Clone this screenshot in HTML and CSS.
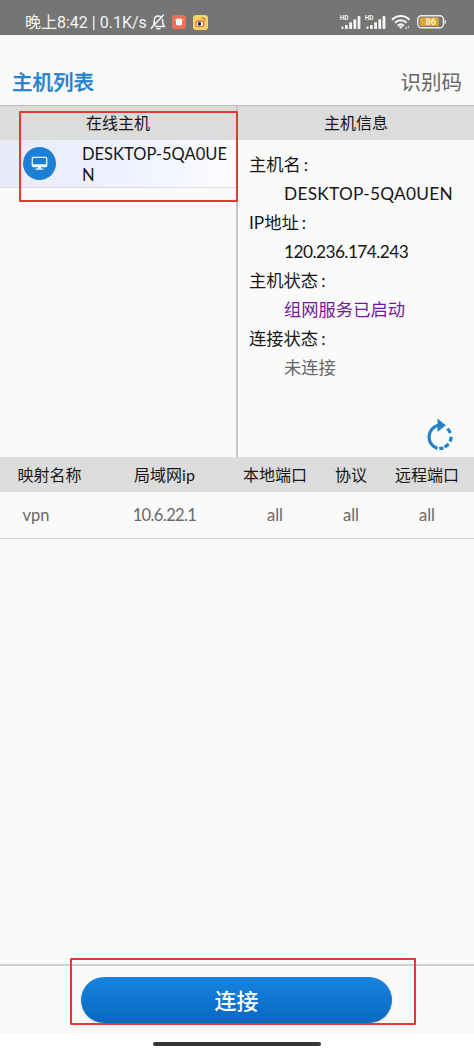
FILE: index.html
```html
<!DOCTYPE html>
<html lang="zh-CN">
<head>
<meta charset="utf-8">
<title>主机列表</title>
<link rel="stylesheet" href="styles.css">
</head>
<body>
<div class="screen">
  <header class="status">
    <span class="clock">晚上8:42 | 0.1K/s</span>
    <svg class="bell" width="16" height="18" viewBox="0 0 16 18" fill="none" stroke="#f4f4f4" stroke-width="1.5" stroke-linecap="round"><path d="M3.300 12.500c1-1.200 1-2.700 1-5C4.300 4.700 6 3 8.400 3c.9 0 1.700.3 2.300.8M12.400 6.300c.1 3 .2 5 1.800 7.200H5.500M1.200 15.200 13.500 2M7 15.800h3"/></svg>
    <svg class="app-a" width="14" height="14" viewBox="0 0 14 14"><rect width="14" height="14" rx="3" fill="#ee7157"/><path d="M4 4.500h6v4.700q0 1.100-1.100 1.100H5.100Q4 10.300 4 9.200zM3.500 4h7v1.500h-7zM5.500 3.400h3v1h-3z" fill="#fff"/></svg>
    <svg class="app-b" width="15" height="15" viewBox="0 0 15 15"><rect width="15" height="15" rx="3" fill="#f5d263"/><ellipse cx="6.900" cy="8.700" rx="4.600" ry="3.500" fill="#cf5a32"/><ellipse cx="6.800" cy="8.900" rx="3.400" ry="2.300" fill="#fff"/><circle cx="6.500" cy="8.900" r="1.800" fill="#30251f"/><path d="M8.600 3.200c2.200-.5 3.700 1 3.400 3" fill="none" stroke="#c96d2e" stroke-width="1.100"/></svg>
    <span class="grow"></span>
    <svg class="signal" width="21" height="15" viewBox="0 0 21 15" fill="#f4f4f4"><text x="-.3" y="5.300" class="hd">HD</text><circle cx="2.500" cy="12.800" r="1.200"/><rect x="5" y="10" width="2.800" height="4" rx=".8"/><rect x="9.200" y="7.200" width="2.800" height="6.800" rx=".8"/><rect x="13.400" y="4.200" width="2.800" height="9.800" rx=".8"/><rect x="17.600" y="1" width="2.800" height="13" rx=".8"/></svg>
    <svg class="signal second" width="21" height="15" viewBox="0 0 21 15" fill="#f4f4f4"><text x="-.3" y="5.300" class="hd">HD</text><circle cx="2.500" cy="12.800" r="1.200"/><rect x="5" y="10" width="2.800" height="4" rx=".8"/><rect x="9.200" y="7.200" width="2.800" height="6.800" rx=".8"/><rect x="13.400" y="4.200" width="2.800" height="9.800" rx=".8"/><rect x="17.600" y="1" width="2.800" height="13" rx=".8"/></svg>
    <svg class="wifi" width="20" height="16" viewBox="0 0 20 16" fill="none" stroke="#f4f4f4" stroke-width="2.100"><path d="M1 5.800c5-5 12.500-5 17.500 0M3.900 8.800c3.500-3.300 8.200-3.300 11.700 0M6.600 11.700c2-1.700 4.400-1.700 6.400 0"/><path d="m9.800 15-2.100-2.300q2.100-1.400 4.200 0z" fill="#f4f4f4" stroke="none"/><path d="m15 13 .1 2.200M17.300 12l-.1 2.200" stroke-width="1"/></svg>
    <svg class="battery" width="30" height="14" viewBox="0 0 30 14"><rect x=".8" y=".8" width="25.600" height="12" rx="3.500" fill="none" stroke="#ededed" stroke-width="1.400"/><rect x="2.700" y="2.600" width="19" height="8.400" rx="1.300" fill="#dfa52e"/><path d="M27.600 4.500q1.600 0 1.600 2.300t-1.600 2.300z" fill="#ededed"/><text x="13.700" y="10" text-anchor="middle" class="level">86</text></svg>
  </header>
  <nav class="tabs"><span class="tab-on">主机列表</span><span class="tab-off">识别码</span></nav>
  <main class="panes">
    <section class="hosts">
      <h2 class="bar">在线主机</h2>
      <div class="host">
        <svg class="pc" width="33" height="33" viewBox="0 0 33 33"><circle cx="16.500" cy="16.500" r="16.500" fill="#1c7fd3"/><rect x="9.300" y="10.300" width="14.400" height="9.200" rx="1" fill="none" stroke="#e9f5ff" stroke-width="1.300"/><path d="M9 17.300h15v2.500H9zM15 19.500h3v2.300h-3zM12.500 21.500h8v1.300h-8z" fill="#e9f5ff"/></svg>
        <span class="host-name">DESKTOP-5QA0UE<br>N</span>
      </div>
      <div class="mark mark-host"></div>
    </section>
    <section class="info">
      <h2 class="bar">主机信息</h2>
      <dl class="facts">
        <dt>主机名<i>:</i></dt><dd class="name">DESKTOP-5QA0UEN</dd>
        <dt>IP地址<i>:</i></dt><dd class="ip">120.236.174.243</dd>
        <dt>主机状态<i>:</i></dt><dd class="running">组网服务已启动</dd>
        <dt>连接状态<i>:</i></dt><dd class="idle">未连接</dd>
      </dl>
      <svg class="refresh" width="30" height="34" viewBox="0 0 30 34" fill="none" stroke="#2380c9" stroke-width="3.200"><path d="M12.500 30.500A12 12 0 0 1 13.500 7.300"/><path d="M12.500.5v13.500l8.300-6.700z" fill="#2380c9" stroke="none"/><path d="m22.600 10.500 2.900 4.500M26.400 18.800l-1.300 4.700M23.700 26l-4 3.300M18.500 30l-4.200.7"/></svg>
    </section>
  </main>
  <div class="map head"><span>映射名称</span><span>局域网ip</span><span>本地端口</span><span>协议</span><span>远程端口</span></div>
  <div class="map row"><span>vpn</span><span class="addr">10.6.22.1</span><span>all</span><span>all</span><span>all</span></div>
  <footer class="foot"><button class="connect">连接</button><div class="mark mark-connect"></div></footer>
  <div class="gesture"><div class="pill"></div></div>
</div>
</body>
</html>
```
FILE: styles.css
```css
* { box-sizing: border-box; }
body { margin: 0; background: #fff; font-family: Lato, "Noto Sans CJK SC", sans-serif; color: #161616; }
.screen { width: 474px; height: 1053px; display: flex; flex-direction: column; background: #fafafa; overflow: hidden; }
svg { display: block; flex: none; }
.status { height: 35px; background: #757575; display: flex; align-items: center; padding: 9px 27px 0 25px; color: #f4f4f4; }
.clock { width: 124px; padding-top: 2px; font: 16px/20px Roboto, "Noto Sans CJK SC", sans-serif; white-space: nowrap; }
.bell { margin-left: 1px; }
.app-a { margin-left: 6px; }
.app-b { margin-left: 7px; }
.grow { flex: 1; }
.hd { font: 700 6.500px Roboto, sans-serif; }
.second { margin-left: 4px; }
.wifi { margin-left: 5px; }
.battery { margin-left: 6px; }
.level { font: 700 9px Roboto, sans-serif; fill: #fff3d1; }
.tabs { height: 70px; display: flex; justify-content: space-between; align-items: center; padding: 23px 12px 0 12px; font-size: 20.500px; line-height: 30px; }
.tab-on { color: #2381cd; font-weight: 500; -webkit-text-stroke: .3px #2381cd; }
.tab-off { color: #666; }
.panes { height: 352px; display: flex; border-top: 1px solid #bbb; }
.hosts { width: 238px; border-right: 2px solid #c9c9c9; position: relative; }
.info { flex: 1; display: flex; flex-direction: column; }
.bar { margin: 0; height: 34px; background: #dcdcdc; font-size: 16px; font-weight: 400; line-height: 34px; text-align: center; }
.host { height: 48px; display: flex; align-items: center; padding-left: 23px; border-bottom: 1px solid #ddd; background: linear-gradient(90deg, #e8eaf7, #edf1ff 45%, #fcfcff); }
.host-name { margin-left: 26px; padding-top: 2px; font-size: 16.500px; line-height: 21px; }
.mark { position: absolute; border: 2px solid #df3b32; border-radius: 1px; }
.mark-host { left: 19px; top: 5px; width: 219px; height: 91px; }
.facts { margin: 10px 0 0 11px; font-size: 17.300px; line-height: 29px; }
.facts dt i { font-style: normal; margin-left: 3px; }
.facts dd { margin-left: 35px; white-space: nowrap; }
.facts .name { letter-spacing: .27px; }
.facts .ip { letter-spacing: -.55px; }
.running { color: #73199b; }
.idle { color: #666; }
.refresh { margin: auto 19px 5px auto; }
.map { display: grid; grid-template-columns: 99px 131px 90px 62px 90px; justify-items: center; align-items: center; }
.head { height: 35px; padding-bottom: 2px; background: #dcdcdc; font-size: 16px; }
.row { height: 47px; border-bottom: 1px solid #d2d2d2; color: #686868; font-size: 16.500px; }
.row span:first-child { margin-right: 27px; }
.addr { letter-spacing: -.6px; }
.foot { margin-top: auto; height: 70px; border-top: 2px solid #d0d0d0; padding: 11px 0 0 81px; position: relative; }
.connect { display: block; width: 311px; height: 46px; border: 0; border-radius: 23px; background: linear-gradient(#1783df, #0868c1); box-shadow: 0 1px 2px #8886; color: #fff; font: 500 22px/46px Lato, "Noto Sans CJK SC", sans-serif; }
.mark-connect { left: 70px; top: -8px; width: 346px; height: 67px; }
.gesture { height: 19px; background: #fff; display: flex; justify-content: center; padding-top: 8px; }
.pill { width: 168px; height: 4px; border-radius: 2px; background: #363636; }
```
